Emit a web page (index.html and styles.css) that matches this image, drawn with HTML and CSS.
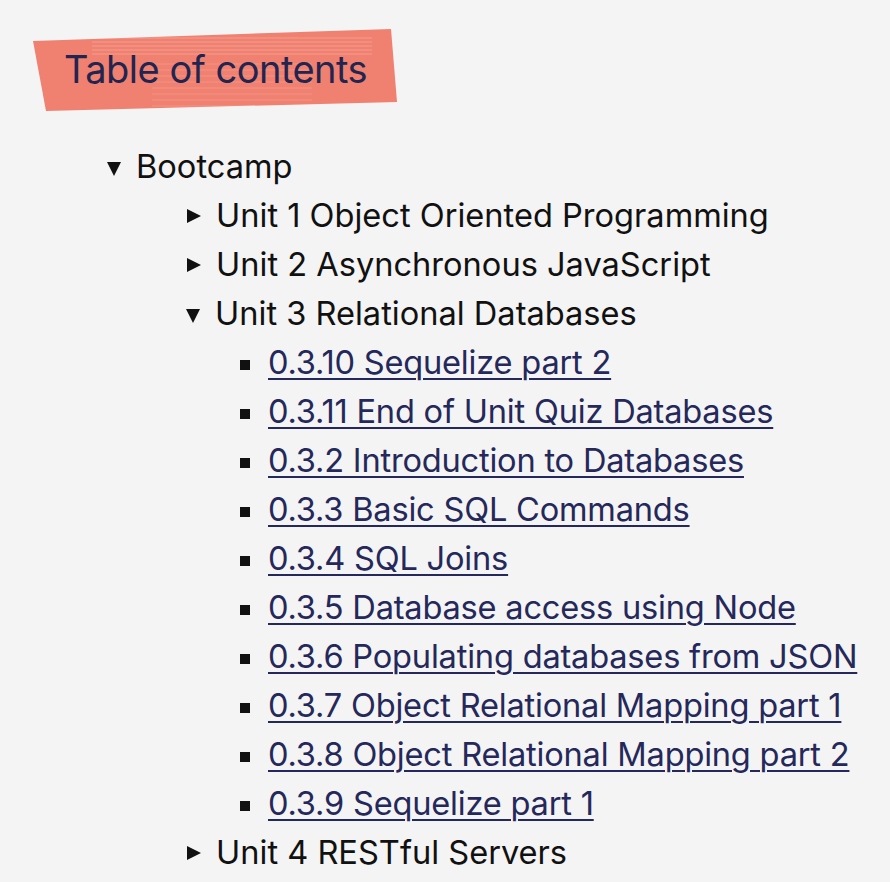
FILE: index.html
```html
<!DOCTYPE html>
<html lang="en">
<head>
<meta charset="utf-8">
<title>Table of contents</title>
<link rel="stylesheet" href="styles.css">
</head>
<body>
<main class="page">
  <h2 class="toc-title">Table of contents</h2>
  <ul class="tree level-0">
    <li class="node open">
      <div class="row"><span class="marker tri-down"></span><span class="label">Bootcamp</span></div>
      <ul class="tree level-1">
        <li class="node"><div class="row"><span class="marker tri-right"></span><span class="label">Unit 1 Object Oriented Programming</span></div></li>
        <li class="node"><div class="row"><span class="marker tri-right"></span><span class="label">Unit 2 Asynchronous JavaScript</span></div></li>
        <li class="node open">
          <div class="row"><span class="marker tri-down"></span><span class="label">Unit 3 Relational Databases</span></div>
          <ul class="tree level-2">
            <li class="row"><span class="marker sq"></span><a href="#" class="link">0.3.10 Sequelize part 2</a></li>
            <li class="row"><span class="marker sq"></span><a href="#" class="link">0.3.11 End of Unit Quiz Databases</a></li>
            <li class="row"><span class="marker sq"></span><a href="#" class="link">0.3.2 Introduction to Databases</a></li>
            <li class="row"><span class="marker sq"></span><a href="#" class="link">0.3.3 Basic SQL Commands</a></li>
            <li class="row"><span class="marker sq"></span><a href="#" class="link">0.3.4 SQL Joins</a></li>
            <li class="row"><span class="marker sq"></span><a href="#" class="link">0.3.5 Database access using Node</a></li>
            <li class="row"><span class="marker sq"></span><a href="#" class="link">0.3.6 Populating databases from JSON</a></li>
            <li class="row"><span class="marker sq"></span><a href="#" class="link">0.3.7 Object Relational Mapping part 1</a></li>
            <li class="row"><span class="marker sq"></span><a href="#" class="link">0.3.8 Object Relational Mapping part 2</a></li>
            <li class="row"><span class="marker sq"></span><a href="#" class="link">0.3.9 Sequelize part 1</a></li>
          </ul>
        </li>
        <li class="node"><div class="row"><span class="marker tri-right"></span><span class="label">Unit 4 RESTful Servers</span></div></li>
      </ul>
    </li>
  </ul>
</main>
</body>
</html>
```
FILE: styles.css
```css
html, body {
  margin: 0;
  padding: 0;
  background: #f4f4f4;
}
body {
  font-family: Inter, "Noto Sans", sans-serif;
  color: #111;
}
.page {
  padding: 29px 0 0 32px;
}
.toc-title {
  margin: 0;
  width: 365px;
  height: 82px;
  box-sizing: border-box;
  padding: 17px 0 0 32px;
  background:
    repeating-linear-gradient(to bottom,
      rgba(255,255,255,0) 0px,
      rgba(255,255,255,0) 2px,
      rgba(255,255,255,0.22) 3px,
      rgba(255,255,255,0) 4px) 60px 6px / 280px 22px no-repeat,
    repeating-linear-gradient(to bottom,
      rgba(255,255,255,0) 0px,
      rgba(255,255,255,0) 4px,
      rgba(255,255,255,0.14) 5px,
      rgba(255,255,255,0) 6px) 120px 30px / 160px 48px no-repeat,
    #f08170;
  clip-path: polygon(1px 12px, 359px 0, 365px 73px, 14px 82px);
  font-weight: 400;
  font-size: 38px;
  line-height: 46px;
  color: #22254f;
  letter-spacing: -0.5px;
}
.tree {
  list-style: none;
  margin: 0;
  padding: 0;
}
.level-0 {
  margin-top: 31px;
  padding-left: 105px;
}
.level-1 {
  padding-left: 79px;
}
.level-2 {
  padding-left: 52px;
}
.row {
  display: flex;
  align-items: flex-start;
  height: 49px;
  font-size: 32.6px;
  line-height: 49px;
}
.marker {
  flex: none;
  width: 0;
  height: 0;
}
.tri-down {
  margin-left: -30px;
  margin-right: 15px;
  margin-top: 20px;
  border-left: 7.5px solid transparent;
  border-right: 7.5px solid transparent;
  border-top: 14px solid #111;
}
.tri-right {
  margin-left: -29px;
  margin-right: 15px;
  margin-top: 18px;
  border-top: 7.5px solid transparent;
  border-bottom: 7.5px solid transparent;
  border-left: 14px solid #111;
}
.sq {
  width: 10px;
  height: 10px;
  margin-left: -28px;
  margin-right: 18px;
  margin-top: 22px;
  background: #111;
}
.link {
  color: #25285a;
  letter-spacing: -0.2px;
  text-decoration: underline;
  text-underline-offset: 4px;
  text-decoration-thickness: 2px;
}
```
